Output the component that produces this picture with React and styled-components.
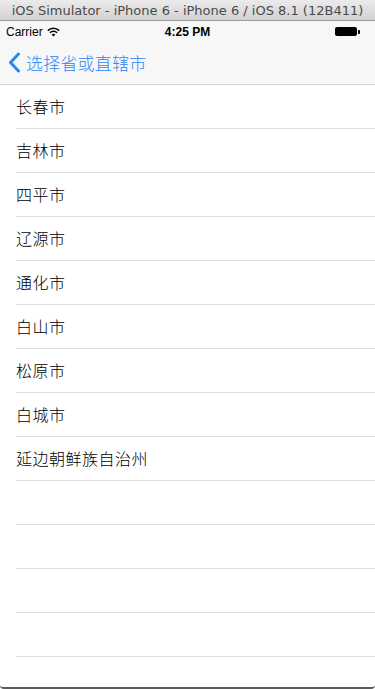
import React from 'react';
import styled, { createGlobalStyle } from 'styled-components';

const Global = createGlobalStyle`
    html, body {
        margin: 0;
        padding: 0;
        background: #ffffff;
    }
    body {
        font-family: "Liberation Sans", "Noto Sans CJK SC", sans-serif;
    }
`

const Screen = styled.div`
    width: 375px;
    height: 689px;
    display: flex;
    flex-direction: column;
    overflow: hidden;
    background: #ffffff;
    border-bottom: 2px solid #5a5a5a;
    border-radius: 0 0 4px 4px;
    box-sizing: border-box;
`

const TitleBar = styled.div`
    height: 20px;
    flex-shrink: 0;
    background: linear-gradient(#ebebeb, #d2d2d2);
    border-bottom: 1px solid #9d9d9d;
    display: flex;
    align-items: center;
    justify-content: center;
    font-family: "DejaVu Sans", "Liberation Sans", sans-serif;
    font-size: 13px;
    color: #4a4a4a;
`

const Header = styled.div`
    background: #f7f7f7;
    border-bottom: 1px solid #d6d6d9;
    flex-shrink: 0;
`

const StatusBar = styled.div`
    height: 20px;
    box-sizing: border-box;
    display: grid;
    grid-template-columns: 1fr auto 1fr;
    align-items: center;
    padding: 1px 6px 0;
    font-size: 12px;
    color: #000;
`

const Carrier = styled.div`
    display: flex;
    align-items: center;
    gap: 4px;
`

const Time = styled.div`
    font-weight: bold;
`

const Battery = styled.div`
    justify-self: end;
    display: flex;
    align-items: center;
    margin-right: 9px;
`

const BatteryBody = styled.div`
    width: 22px;
    height: 9px;
    background: #000;
    border-radius: 2px;
`

const BatteryTip = styled.div`
    width: 2px;
    height: 4px;
    background: #000;
    margin-left: 1px;
    border-radius: 0 1px 1px 0;
`

const NavBar = styled.div`
    height: 43px;
    display: flex;
    align-items: center;
    padding-left: 8px;
    gap: 5px;
    color: #2a86f7;
`

const NavTitle = styled.span`
    font-size: 17px;
    font-family: "Noto Sans CJK SC", sans-serif;
    font-weight: 300;
    letter-spacing: 0.2px;
`

const List = styled.div`
    flex: 1;
    display: flex;
    flex-direction: column;
`

const Row = styled.div`
    height: 44px;
    flex-shrink: 0;
    margin-left: 16px;
    border-bottom: 1px solid #e0e0e0;
    box-sizing: border-box;
    display: flex;
    align-items: center;
    padding-bottom: 1px;
    font-family: "Noto Sans CJK SC", sans-serif;
    font-weight: 300;
    font-size: 16px;
    letter-spacing: 0.5px;
    color: #000;
`

const cities = ['长春市', '吉林市', '四平市', '辽源市', '通化市', '白山市', '松原市', '白城市', '延边朝鲜族自治州', '', '', '', '', ''];

const Wifi = () => (
    <svg width="13" height="10" viewBox="0 0 13 10">
        <path d="M0.8 3.6 A8 8 0 0 1 12.2 3.6" stroke="#000" strokeWidth="1.5" fill="none" />
        <path d="M2.9 5.7 A5 5 0 0 1 10.1 5.7" stroke="#000" strokeWidth="1.5" fill="none" />
        <path d="M6.5 9.6 L4.6 7.6 A2.7 2.7 0 0 1 8.4 7.6 Z" fill="#000" />
    </svg>
)

const Chevron = () => (
    <svg width="13" height="21" viewBox="0 0 13 21">
        <path d="M10.5 2 L2.5 10.5 L10.5 19" stroke="#2a86f7" strokeWidth="3" fill="none" strokeLinecap="round" strokeLinejoin="round" />
    </svg>
)

export default () =>
    <Screen>
        <Global />
        <TitleBar>iOS Simulator - iPhone 6 - iPhone 6 / iOS 8.1 (12B411)</TitleBar>
        <Header>
            <StatusBar>
                <Carrier>Carrier <Wifi /></Carrier>
                <Time>4:25 PM</Time>
                <Battery>
                    <BatteryBody />
                    <BatteryTip />
                </Battery>
            </StatusBar>
            <NavBar>
                <Chevron />
                <NavTitle>选择省或直辖市</NavTitle>
            </NavBar>
        </Header>
        <List>
            {cities.map((c, i) => <Row key={i}>{c}</Row>)}
        </List>
    </Screen>
